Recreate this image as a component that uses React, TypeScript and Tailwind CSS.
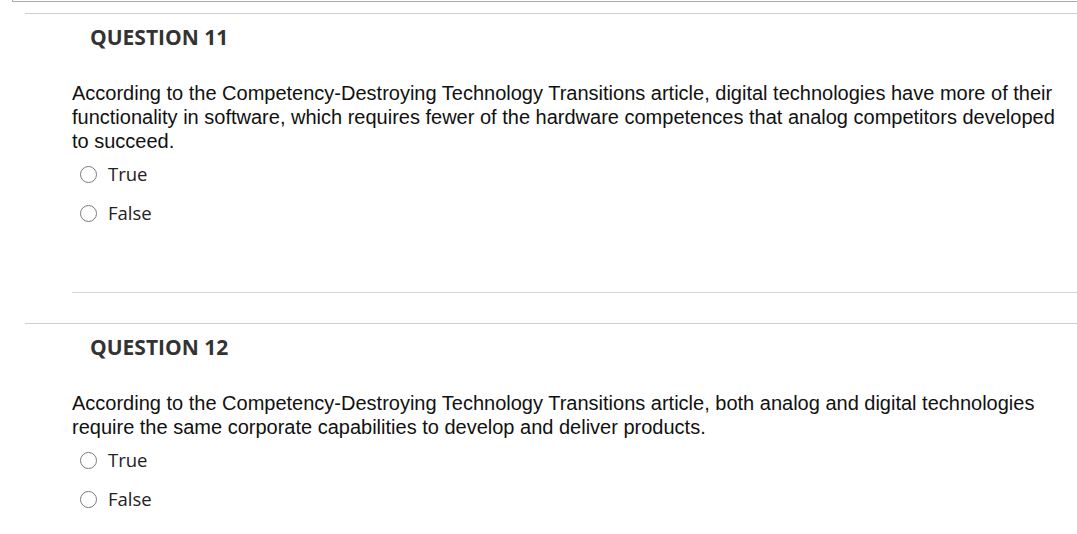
import React from "react";

const Option = ({ label }: { label: string }) => (
  <div className="flex items-center h-[24px] pl-[8px] gap-[11px]">
    <span className="w-[17px] h-[17px] rounded-full border border-[#7a7a7a] bg-white" />
    <span className="text-[18.5px] leading-[24px] text-[#222]" style={{ fontFamily: '"Open Sans", sans-serif' }}>
      {label}
    </span>
  </div>
);

const Question = ({ num, text, divider }: { num: number; text: string; divider: boolean }) => (
  <div className="ml-[25px] border-t border-[#cfcfcf]">
    <div
      className="pl-[65px] pt-[9px] text-[21px] leading-[28px] font-bold text-[#333]"
      style={{ fontFamily: '"Open Sans", sans-serif' }}
    >
      QUESTION {num}
    </div>
    <div className={"ml-[47px] mt-[30px] " + (divider ? "border-b border-[#d6d6d6] pb-[67px]" : "")}>
      <p
        className="pr-[16px] text-[20px] leading-[24px] text-[#111]"
        style={{ fontFamily: '"Liberation Sans", Arial, sans-serif' }}
      >
        {text}
      </p>
      <div className="mt-[9px] flex flex-col gap-[15px]">
        <Option label="True" />
        <Option label="False" />
      </div>
    </div>
  </div>
);

export default function App() {
  return (
    <div className="w-[1077px] h-[534px] bg-white overflow-hidden">
      <div className="ml-[12px] h-[2px] border-l border-b border-[#a8a8a8]" />
      <div className="h-[11px]" />
      <Question
        num={11}
        divider={true}
        text="According to the Competency-Destroying Technology Transitions article, digital technologies have more of their functionality in software, which requires fewer of the hardware competences that analog competitors developed to succeed."
      />
      <div className="h-[30px]" />
      <Question
        num={12}
        divider={false}
        text="According to the Competency-Destroying Technology Transitions article, both analog and digital technologies require the same corporate capabilities to develop and deliver products."
      />
    </div>
  );
}
